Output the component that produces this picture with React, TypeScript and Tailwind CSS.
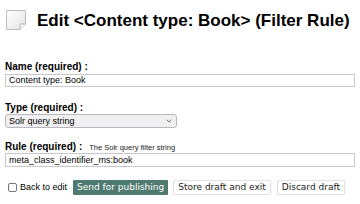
import { ChevronDown } from "lucide-react";

function PageIcon() {
  return (
    <svg width="22" height="22" viewBox="0 0 22 22">
      <defs>
        <linearGradient id="pg" x1="0" y1="0" x2="1" y2="1">
          <stop offset="0" stopColor="#ffffff" />
          <stop offset="1" stopColor="#e4e4e4" />
        </linearGradient>
      </defs>
      <path d="M1.5 1.5 H20.5 V15 L15 20.5 H1.5 Z" fill="url(#pg)" stroke="#bdbdbd" />
      <path d="M20.5 15 H16 Q15 15 15 16 V20.5" fill="#f4f4f4" stroke="#b5b5b5" />
    </svg>
  );
}

export default function App() {
  return (
    <div className="w-[360px] h-[204px] bg-white overflow-hidden font-['Liberation_Sans',Arial,sans-serif] text-black">
      <div className="flex items-center pl-[5px] pt-[9px] gap-[10px]">
        <PageIcon />
        <h1 className="text-[17px] font-bold leading-none">Edit &lt;Content type: Book&gt; (Filter Rule)</h1>
      </div>

      <div className="px-[5px] mt-[30px]">
        <label className="block text-[10px] font-bold leading-[12px]">Name (required) :</label>
        <div className="mt-[1px] h-[13px] border border-[#c9c9cc] flex items-center px-[3px] text-[9px] leading-none">
          Content type: Book
        </div>

        <label className="block mt-[15px] text-[10px] font-bold leading-[12px]">Type (required) :</label>
        <div className="mt-0 w-[172px] h-[14px] border border-[#b8b8bc] rounded-[3px] bg-[#f0f0f2] flex items-center justify-between px-[3px] text-[9px] leading-none">
          <span>Solr query string</span>
          <ChevronDown className="w-[8px] h-[8px] text-[#555]" strokeWidth={2.5} />
        </div>

        <div className="mt-[13px] flex items-baseline gap-[7px]">
          <label className="text-[10px] font-bold leading-[12px]">Rule (required) :</label>
          <span className="text-[7.5px] text-[#222]">The Solr query filter string</span>
        </div>
        <div className="mt-0 h-[14px] border border-[#c9c9cc] flex items-center px-[3px] text-[9px] leading-none">
          meta_class_identifier_ms:book
        </div>

        <div className="mt-[13px] flex items-center font-['DejaVu_Sans',Verdana,sans-serif]">
          <div className="ml-[3px] w-[9px] h-[9px] border border-[#777] rounded-[2px] bg-white" />
          <span className="ml-[3px] font-['Liberation_Sans',Arial,sans-serif] text-[9px]">Back to edit</span>
          <button className="ml-[6px] h-[15px] px-[4px] bg-[#4f7a70] text-white text-[9px] leading-none rounded-[1px]">
            Send for publishing
          </button>
          <button className="ml-[5px] h-[15px] px-[4px] bg-white border border-[#e2e2e2] text-[#222] text-[9px] leading-none rounded-[1px]">
            Store draft and exit
          </button>
          <button className="ml-[6px] h-[15px] px-[4px] bg-white border border-[#e2e2e2] text-[#222] text-[9px] leading-none rounded-[1px]">
            Discard draft
          </button>
        </div>
      </div>
    </div>
  );
}
